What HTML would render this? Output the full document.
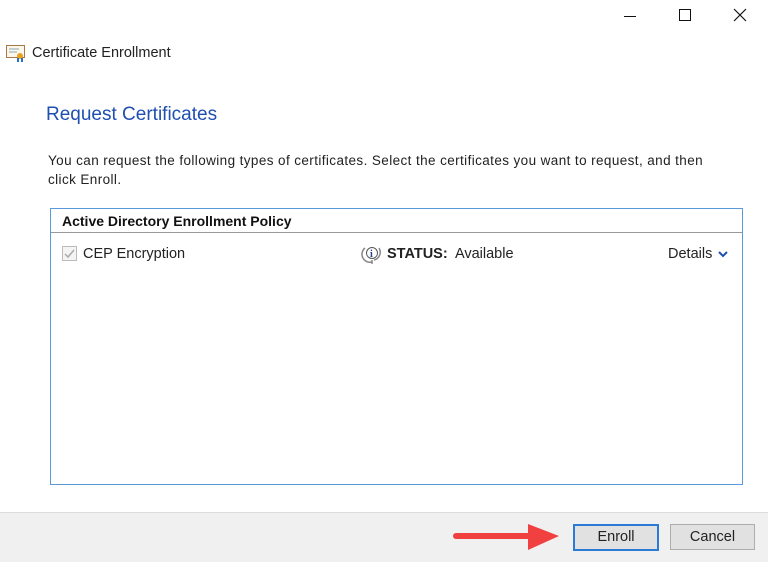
<!DOCTYPE html>
<html><head><style>
body{margin:0;width:768px;height:561px;background:#fff;font-family:"Liberation Sans",sans-serif;position:relative;overflow:hidden;color:#000}
.a{position:absolute}
</style></head><body>
<div class="a" style="left:624px;top:16px;width:12px;height:1px;background:#111"></div>
<div class="a" style="left:679px;top:9px;width:10px;height:10px;border:1px solid #111"></div>
<svg class="a" style="left:733px;top:8px" width="14" height="14"><path d="M1 1L13 13M13 1L1 13" stroke="#111" stroke-width="1.2"/></svg>
<svg class="a" style="left:6px;top:45px" width="20" height="18"><rect x="0.5" y="0.5" width="18" height="12" fill="#fdf7ea" stroke="#a47a4a"/><path d="M3 4h10M3 7h8" stroke="#8ab" stroke-width="1"/><circle cx="14" cy="11" r="3" fill="#e8a020"/><path d="M12 13v4M16 13v4" stroke="#2a6fd0" stroke-width="2"/></svg>
<div class="a" style="left:32px;top:45px;font-size:14.5px;color:#222">Certificate Enrollment</div>
<div class="a" style="left:46px;top:104px;font-size:19px;color:#1f4fb0">Request Certificates</div>
<div class="a" style="left:48px;top:151px;font-size:13.5px;line-height:19px;color:#222;width:680px;letter-spacing:0.4px">You can request the following types of certificates. Select the certificates you want to request, and then click Enroll.</div>
<div class="a" style="left:50px;top:208px;width:691px;height:275px;border:1px solid #5a9ad8"></div>
<div class="a" style="left:51px;top:232px;width:691px;height:1px;background:#999"></div>
<div class="a" style="left:62px;top:213px;font-size:14px;font-weight:bold;color:#111">Active Directory Enrollment Policy</div>
<div class="a" style="left:62px;top:246px;width:13px;height:13px;border:1px solid #bbb;background:#f4f4f4"></div>
<svg class="a" style="left:63px;top:247px" width="13" height="13"><path d="M2 7l3 3 6-7" stroke="#aaa" stroke-width="1.5" fill="none"/></svg>
<div class="a" style="left:83px;top:246px;font-size:14.5px;color:#222">CEP Encryption</div>
<svg class="a" style="left:361px;top:243px" width="22" height="22"><path d="M4 5a8 8 0 0 0 7 14" stroke="#888" stroke-width="1.5" fill="none"/><path d="M18 5a8 8 0 0 1-5 12" stroke="#888" stroke-width="1.5" fill="none"/><path d="M11 17v4" stroke="#888" stroke-width="1.5"/><circle cx="11" cy="10" r="5.5" fill="#fff" stroke="#555"/><text x="9" y="14" font-size="10" font-weight="bold" font-family="Liberation Serif" fill="#1c3f8c">i</text></svg>
<div class="a" style="left:387px;top:246px;font-size:14.5px;color:#222"><b>STATUS:</b>&nbsp; Available</div>
<div class="a" style="left:668px;top:246px;font-size:14.5px;color:#222">Details</div>
<svg class="a" style="left:718px;top:250px" width="10" height="8"><path d="M1 2l4 4 4-4" stroke="#1c4fb0" stroke-width="2" fill="none"/></svg>
<div class="a" style="left:0;top:512px;width:768px;height:49px;background:#f0f0f0;border-top:1px solid #dcdcdc"></div>
<div class="a" style="left:573px;top:524px;width:82px;height:23px;border:2px solid #2a7ad6;background:#e1e1e1;box-sizing:content-box"></div>
<div class="a" style="left:573px;top:529px;width:86px;text-align:center;font-size:14.5px;color:#222">Enroll</div>
<div class="a" style="left:670px;top:524px;width:83px;height:24px;border:1px solid #adadad;background:#e1e1e1"></div>
<div class="a" style="left:670px;top:529px;width:85px;text-align:center;font-size:14.5px;color:#222">Cancel</div>
<svg class="a" style="left:450px;top:520px" width="112" height="32"><path d="M6 16H80" stroke="#f04040" stroke-width="6" stroke-linecap="round"/><path d="M78 4L109 16L78 30Z" fill="#f04040"/></svg>
</body></html>
